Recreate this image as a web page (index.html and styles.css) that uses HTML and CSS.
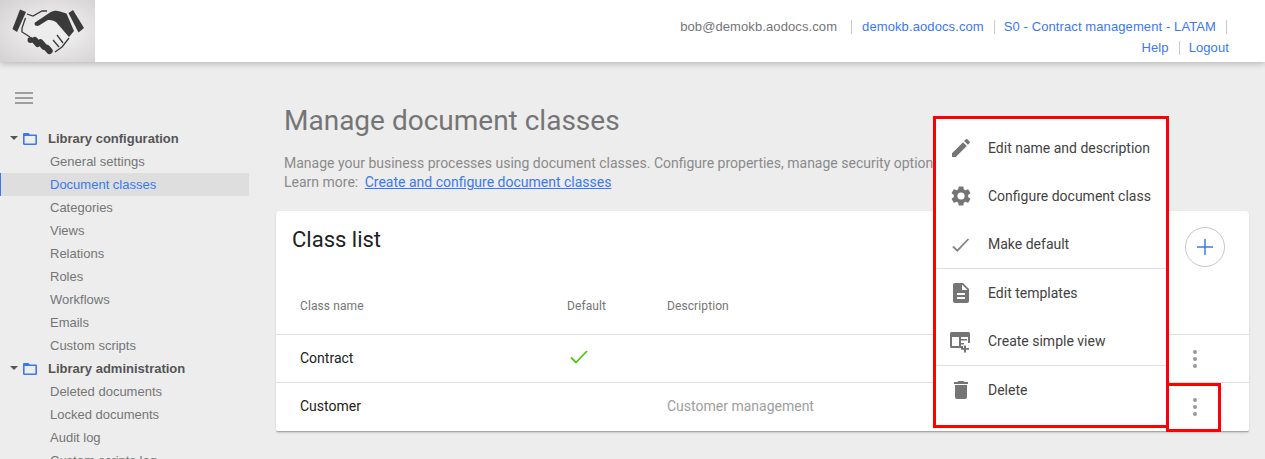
FILE: index.html
```html
<!DOCTYPE html>
<html lang="en">
<head>
<meta charset="utf-8">
<title>Manage document classes</title>
<link rel="stylesheet" href="styles.css">
</head>
<body>
<header class="topbar">
  <div class="logo">
    <svg viewBox="0 0 95 62" width="95" height="62">
      <g fill="#3a3a3a">
        <path d="M20 9.500L26 12 17 32 12.500 29z"/>
        <path d="M68.500 13L73 10 84 28 78.500 32.500z"/>
        <path d="M35 22.500L50 12.500C53 10.500 57 10.500 60 11.500L66.500 13.500 74 31 69 37 56 22C53 20.500 50 19.500 47 20.500L39 25.500C36 27 33.500 24.500 35 22.500z"/>
        <circle cx="30.500" cy="40" r="3"/>
        <rect x="33" y="36.500" width="6.500" height="11" rx="3.200" transform="rotate(-42 36.250 42)"/>
        <rect x="39" y="38.500" width="6.500" height="12" rx="3.200" transform="rotate(-42 42.250 44.500)"/>
        <rect x="45" y="44.500" width="6.500" height="10" rx="3.200" transform="rotate(-42 48.250 49.500)"/>
      </g>
      <path d="M27 14L33 16 42 11 47 11M25.500 18L22 28V32L30 37M69 38L62 47 55 52M57 35L63 43M53 40L59 47" fill="none" stroke="#3a3a3a" stroke-width="1.300"/>
    </svg>
  </div>
  <div class="account">
    <div class="account-row">
      <span class="user">bob@demokb.aodocs.com</span>
      <span class="sep sep-wide"></span>
      <a class="link" href="#">demokb.aodocs.com</a>
      <span class="sep"></span>
      <a class="link" href="#">S0 - Contract management - LATAM</a>
      <span class="sep sep-end"></span>
    </div>
    <div class="account-row">
      <a class="link" href="#">Help</a>
      <span class="sep"></span>
      <a class="link" href="#">Logout</a>
    </div>
  </div>
</header>

<div class="layout">
  <nav class="sidebar">
    <div class="burger"><span></span><span></span><span></span></div>
    <div class="tree-head">
      <span class="caret"></span>
      <svg class="folder" viewBox="0 0 14 12" width="14" height="12"><path d="M1.200 0h4.300l1.500 1.500h5.800c.7 0 1.200.5 1.200 1.200v8.100c0 .7-.5 1.200-1.200 1.200H1.200C.5 12 0 11.500 0 10.800V1.200C0 .5.500 0 1.200 0zm.4 3.100v7.300h10.800V3.100z" fill="#3b78f2"/></svg>
      <span>Library configuration</span>
    </div>
    <a class="tree-item" href="#">General settings</a>
    <a class="tree-item active" href="#">Document classes</a>
    <a class="tree-item" href="#">Categories</a>
    <a class="tree-item" href="#">Views</a>
    <a class="tree-item" href="#">Relations</a>
    <a class="tree-item" href="#">Roles</a>
    <a class="tree-item" href="#">Workflows</a>
    <a class="tree-item" href="#">Emails</a>
    <a class="tree-item" href="#">Custom scripts</a>
    <div class="tree-head">
      <span class="caret"></span>
      <svg class="folder" viewBox="0 0 14 12" width="14" height="12"><path d="M1.200 0h4.300l1.500 1.500h5.800c.7 0 1.200.5 1.200 1.200v8.100c0 .7-.5 1.200-1.200 1.200H1.200C.5 12 0 11.500 0 10.800V1.200C0 .5.500 0 1.200 0zm.4 3.100v7.300h10.800V3.100z" fill="#3b78f2"/></svg>
      <span>Library administration</span>
    </div>
    <a class="tree-item" href="#">Deleted documents</a>
    <a class="tree-item" href="#">Locked documents</a>
    <a class="tree-item" href="#">Audit log</a>
    <a class="tree-item" href="#">Custom scripts log</a>
  </nav>

  <main class="main">
    <h1 class="title">Manage document classes</h1>
    <p class="intro">Manage your business processes using document classes. Configure properties, manage security options and more.</p>
    <p class="intro learn">Learn more: <a class="intro-link" href="#">Create and configure document classes</a></p>

    <section class="card">
      <div class="card-head">
        <h2 class="card-title">Class list</h2>
        <button class="add" type="button" aria-label="Add">
          <svg viewBox="0 0 16 16" width="16" height="16"><path d="M8 0v16M0 8h16" stroke="#3b78f2" stroke-width="1.500" fill="none"/></svg>
        </button>
      </div>
      <div class="row row-head">
        <span class="col-name">Class name</span>
        <span class="col-default">Default</span>
        <span class="col-desc">Description</span>
      </div>
      <div class="row">
        <span class="col-name">Contract</span>
        <span class="col-default">
          <svg viewBox="0 0 18 14" width="18" height="14"><path d="M1 7.500l5 5L17 1" fill="none" stroke="#4fc70f" stroke-width="1.800"/></svg>
        </span>
        <span class="col-desc"></span>
        <span class="more"><i></i><i></i><i></i></span>
      </div>
      <div class="row row-last">
        <span class="col-name">Customer</span>
        <span class="col-default"></span>
        <span class="col-desc muted">Customer management</span>
        <span class="more"><i></i><i></i><i></i></span>
      </div>
    </section>
  </main>
</div>

<div class="menu">
  <div class="menu-group">
    <div class="menu-item">
      <svg class="menu-icon" viewBox="0 0 24 24"><path d="M3 17.250V21h3.750L17.810 9.940l-3.750-3.750L3 17.250zM20.710 7.040a1 1 0 0 0 0-1.410l-2.340-2.340a1 1 0 0 0-1.410 0l-1.830 1.830 3.750 3.750 1.830-1.830z"/></svg>
      <span>Edit name and description</span>
    </div>
    <div class="menu-item">
      <svg class="menu-icon" viewBox="0 0 24 24"><path d="M19.140 12.940c.04-.3.060-.61.060-.94s-.02-.64-.07-.94l2.030-1.580a.49.49 0 0 0 .12-.61l-1.920-3.320a.49.49 0 0 0-.59-.22l-2.390.96c-.5-.38-1.030-.7-1.620-.94l-.36-2.540a.48.48 0 0 0-.48-.41h-3.840a.48.48 0 0 0-.47.41l-.36 2.540c-.59.24-1.130.57-1.620.94l-2.390-.96a.48.48 0 0 0-.59.22L2.740 8.870a.48.48 0 0 0 .12.61l2.030 1.580c-.05.3-.09.63-.09.94s.02.64.07.94l-2.030 1.580a.49.49 0 0 0-.12.61l1.920 3.320c.12.22.37.29.59.22l2.390-.96c.5.38 1.030.7 1.620.94l.36 2.540c.05.24.24.41.48.41h3.840c.24 0 .44-.17.47-.41l.36-2.540c.59-.24 1.130-.56 1.620-.94l2.390.96c.22.08.47 0 .59-.22l1.920-3.320a.48.48 0 0 0-.12-.61l-2.010-1.580zM12 15.600A3.610 3.610 0 0 1 8.400 12 3.610 3.610 0 0 1 12 8.400a3.610 3.610 0 0 1 3.600 3.600 3.610 3.610 0 0 1-3.600 3.600z"/></svg>
      <span>Configure document class</span>
    </div>
    <div class="menu-item">
      <svg class="menu-icon" viewBox="0 0 24 24"><path d="M4 14.500l4.300 4.200L19.500 7" fill="none" stroke="#858585" stroke-width="1.800"/></svg>
      <span>Make default</span>
    </div>
  </div>
  <div class="menu-group">
    <div class="menu-item">
      <svg class="menu-icon" viewBox="0 0 24 24"><path d="M14 2H6c-1.100 0-2 .9-2 2v16c0 1.100.9 2 2 2h12c1.100 0 2-.9 2-2V8l-6-6zm2 16H8v-2h8v2zm0-4H8v-2h8v2zm-3-5V3.500L18.500 9H13z"/></svg>
      <span>Edit templates</span>
    </div>
    <div class="menu-item">
      <svg class="menu-icon" viewBox="0 0 24 24"><path d="M2.500 3h17A1.500 1.500 0 0 1 21 4.500V14h-2V8h-7v2h6v1.500h-6V14h3v1.500h-3V17h2v2H2.500A1.500 1.500 0 0 1 1 17.500V4.500A1.500 1.500 0 0 1 2.500 3zM3 8v9h7V8zM15 16.500h2V19h3v1.800h-3v2.700h-2v-2.700h-3V19h3z"/></svg>
      <span>Create simple view</span>
    </div>
  </div>
  <div class="menu-group">
    <div class="menu-item">
      <svg class="menu-icon" viewBox="0 0 24 24"><path d="M6 19c0 1.100.9 2 2 2h8c1.100 0 2-.9 2-2V7H6v12zM19 4h-3.500l-1-1h-5l-1 1H5v2h14V4z"/></svg>
      <span>Delete</span>
    </div>
  </div>
</div>
<div class="mark mark-menu"></div>
<div class="mark mark-more"></div>
</body>
</html>
```

FILE: styles.css
```css
* { box-sizing: border-box; }

html, body {
  margin: 0;
  height: 459px;
  overflow: hidden;
}

body {
  background: #ededed;
  font-family: "Liberation Sans", Arial, sans-serif;
  font-size: 13px;
  color: #757575;
}

a { text-decoration: none; }

.topbar {
  height: 62px;
  background: #fff;
  display: flex;
  justify-content: space-between;
  box-shadow: 0 2px 6px rgba(0, 0, 0, 0.22);
  position: relative;
}

.logo {
  width: 95px;
  height: 62px;
  background: radial-gradient(ellipse at 55% 50%, #eeedee 25%, #d3d0d1 100%);
}

.logo svg {
  display: block;
  filter: blur(0.4px);
}

.account {
  padding: 18px 36px 0 0;
  display: flex;
  flex-direction: column;
  align-items: flex-end;
  gap: 4px;
  letter-spacing: 0.1px;
}

.account-row {
  display: flex;
  align-items: center;
  height: 17px;
  line-height: 17px;
}

.user { color: #757575; }
.link { color: #3b78f2; }

.sep {
  width: 1px;
  height: 14px;
  background: #c8c8c8;
  margin: 0 9px 0 10px;
}

.sep-wide { margin-left: 14px; margin-right: 10px; }
.sep-end { margin-right: 2px; }

.layout {
  display: flex;
  align-items: flex-start;
}

.sidebar {
  width: 249px;
  flex: none;
  padding-top: 30px;
}

.burger {
  display: flex;
  flex-direction: column;
  gap: 3px;
  width: 18px;
  margin: 0 0 23px 15px;
}

.burger span {
  height: 2px;
  background: #9e9e9e;
}

.tree-head {
  display: flex;
  align-items: center;
  height: 23px;
  padding-left: 10px;
  font-weight: 700;
  color: #555;
}

.caret {
  width: 0;
  height: 0;
  border-left: 4px solid transparent;
  border-right: 4px solid transparent;
  border-top: 4px solid #555;
  margin-right: 5px;
  position: relative;
  top: -1px;
}

.folder {
  margin-right: 11px;
  flex: none;
}

.tree-item {
  display: block;
  height: 23px;
  line-height: 23px;
  padding-left: 50px;
  color: #757575;
}

.tree-item.active {
  background: #dedede;
  color: #3b78f2;
  border-left: 1px solid #3b78f2;
  padding-left: 49px;
}

.main {
  flex: 1;
  padding: 0 16px 0 27px;
}

.title {
  margin: 42px 0 0 8px;
  font-family: Roboto, sans-serif;
  font-size: 28px;
  line-height: 34px;
  font-weight: 400;
  color: #757575;
}

.intro {
  margin: 16px 0 0 8px;
  font-family: Roboto, sans-serif;
  font-size: 14px;
  line-height: 19px;
  color: #8a8a8a;
  white-space: nowrap;
}

.learn { margin-top: 0; }

.intro-link {
  color: #3b78f2;
  text-decoration: underline;
  margin-left: 3px;
}

.card {
  margin-top: 19px;
  background: #fff;
  border-radius: 4px 4px 2px 2px;
  border-bottom: 1px solid #a8a8a8;
  box-shadow: 0 1px 2px rgba(0, 0, 0, 0.15);
  height: 221px;
}

.card-head {
  display: flex;
  justify-content: space-between;
  height: 73px;
  padding: 15px 24px 0 16px;
}

.card-title {
  margin: 0;
  font-family: Roboto, sans-serif;
  font-size: 22px;
  line-height: 28px;
  font-weight: 400;
  color: #212121;
}

.add {
  width: 40px;
  height: 40px;
  margin-top: 1px;
  padding: 0;
  background: #fff;
  border: 1px solid #c8c8c8;
  border-radius: 50%;
  display: flex;
  align-items: center;
  justify-content: center;
}

.row {
  display: flex;
  align-items: center;
  height: 48px;
  padding-bottom: 2px;
  border-top: 1px solid #e0e0e0;
  font-family: Roboto, sans-serif;
  font-size: 14px;
  color: #212121;
  position: relative;
}

.row-head {
  height: 50px;
  padding-bottom: 6px;
  border-top: 0;
  font-size: 12px;
  letter-spacing: 0.1px;
  color: #757575;
}

.col-name { width: 291px; padding-left: 24px; flex: none; }
.col-default { width: 100px; flex: none; display: flex; }
.row:not(.row-head) .col-default svg { margin: 0 0 2px 3px; }
.col-desc { flex: 1; }
.muted { color: #9e9e9e; }

.more {
  position: absolute;
  right: 52px;
  top: 15px;
  display: flex;
  flex-direction: column;
  gap: 3px;
}

.more i {
  width: 4px;
  height: 4px;
  border-radius: 50%;
  background: #999;
}

.menu {
  position: absolute;
  left: 936px;
  top: 119px;
  width: 230px;
  height: 306px;
  background: #fff;
  font-family: Roboto, sans-serif;
  font-size: 14px;
  color: #424242;
}

.menu-group {
  border-bottom: 1px solid #e0e0e0;
}

.menu-group:first-child { padding-top: 5px; }
.menu-group:last-child { border-bottom: 0; }

.menu-item {
  display: flex;
  align-items: center;
  height: 48px;
  padding-left: 13px;
}

.menu-icon {
  width: 24px;
  height: 24px;
  fill: #757575;
  margin-right: 15px;
  flex: none;
}

.mark {
  position: absolute;
  border: 3px solid #ff0000;
  pointer-events: none;
}

.mark-menu {
  left: 933px;
  top: 116px;
  width: 236px;
  height: 312px;
}

.mark-more {
  left: 1166px;
  top: 383px;
  width: 55px;
  height: 49px;
}
```
